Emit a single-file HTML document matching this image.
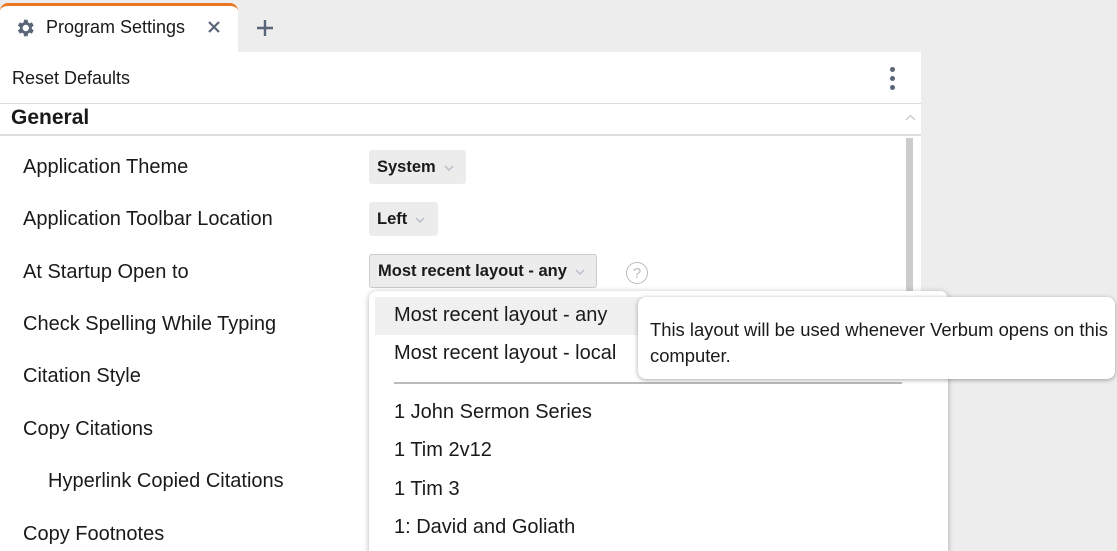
<!DOCTYPE html>
<html style="height:551px;overflow:hidden"><head><style>
body{margin:0;width:1117px;height:551px;background:#ededed;font-family:"Liberation Sans",sans-serif;position:relative;overflow:hidden;color:#1a1a1a}
.abs{position:absolute}
.tab{left:0;top:3px;width:238px;height:50px;background:#fff;border-top:3px solid #e87722;border-radius:8px 8px 0 0;box-sizing:border-box}
.panel{left:0;top:52px;width:921px;height:499px;background:#fff}
.lbl{font-size:20px;left:23px}
.sel{background:#ececec;border-radius:3px;font-size:16.5px;font-weight:bold;height:34px;line-height:34px;padding:0 8px;box-sizing:border-box;white-space:nowrap}
.chev{display:inline-block;width:10px;height:6px;margin-left:8px;vertical-align:middle}
.pop{left:369px;top:291px;width:579px;height:270px;background:#fff;border-radius:8px;box-shadow:0 1px 6px rgba(0,0,0,.3);overflow:hidden}
.it{font-size:20px;left:25px}
.tip{left:638px;top:297px;width:477px;height:82px;background:#fff;border-radius:8px;box-shadow:0 1px 5px rgba(0,0,0,.35);font-size:18.4px;line-height:26px;padding:20px 0 0 12px;box-sizing:border-box;white-space:nowrap}
</style></head><body>
<div class="abs tab"></div>
<svg class="abs" style="left:14px;top:17px" width="22" height="22" viewBox="0 0 24 24"><path fill="#5a6577" d="M19.4 13a7.5 7.5 0 000-2l2.1-1.6-2-3.5-2.5 1a7.3 7.3 0 00-1.700-1L14.9 3h-4l-.4 2.9a7.3 7.3 0 00-1.7 1l-2.5-1-2 3.5L6.4 11a7.5 7.5 0 000 2l-2.1 1.6 2 3.5 2.5-1a7.3 7.3 0 001.7 1l.4 2.9h4l.4-2.9a7.3 7.3 0 001.7-1l2.5 1 2-3.5zM12.9 15.5a3.5 3.5 0 110-7 3.5 3.5 0 010 7z"/></svg>
<div class="abs" style="left:46px;top:17px;font-size:18px">Program Settings</div>
<svg class="abs" style="left:207px;top:20px" width="14" height="14" viewBox="0 0 14 14"><path d="M2 2L12 12M12 2L2 12" stroke="#5a6577" stroke-width="2.2"/></svg>
<svg class="abs" style="left:256px;top:19px" width="18" height="18" viewBox="0 0 18 18"><path d="M9 1V17M1 9H17" stroke="#5a6577" stroke-width="2.4"/></svg>
<div class="abs panel"></div>
<div class="abs" style="left:12px;top:68px;font-size:18px">Reset Defaults</div>
<div class="abs" style="left:890px;top:67px;width:6px"><div style="width:5px;height:5px;border-radius:50%;background:#5a6577;margin-bottom:4px"></div><div style="width:5px;height:5px;border-radius:50%;background:#5a6577;margin-bottom:4px"></div><div style="width:5px;height:5px;border-radius:50%;background:#5a6577"></div></div>
<div class="abs" style="left:0;top:103px;width:921px;height:1px;background:#ddd"></div>
<div class="abs" style="left:11px;top:106px;font-size:21px;font-weight:bold">General</div>
<svg class="abs" style="left:905px;top:114px" width="11" height="7" viewBox="0 0 11 7"><path d="M1 6L5.5 1.5L10 6" fill="none" stroke="#ccc" stroke-width="1.4"/></svg>
<div class="abs" style="left:0;top:134px;width:921px;height:2px;background:#ddd"></div>
<div class="abs" style="left:906px;top:138px;width:7px;height:160px;background:#ccc"></div>
<div class="abs lbl" style="top:156px">Application Theme</div>
<div class="abs lbl" style="top:208px">Application Toolbar Location</div>
<div class="abs lbl" style="top:261px">At Startup Open to</div>
<div class="abs lbl" style="top:313px">Check Spelling While Typing</div>
<div class="abs lbl" style="top:365px">Citation Style</div>
<div class="abs lbl" style="top:418px">Copy Citations</div>
<div class="abs lbl" style="top:470px;left:48px">Hyperlink Copied Citations</div>
<div class="abs lbl" style="top:523px">Copy Footnotes</div>
<div class="abs sel" style="left:369px;top:150px;width:97px">System<svg class="chev" viewBox="0 0 10 6"><path d="M1 1L5 5L9 1" fill="none" stroke="#b8c0cc" stroke-width="1.5"/></svg></div>
<div class="abs sel" style="left:369px;top:202px;width:69px">Left<svg class="chev" viewBox="0 0 10 6"><path d="M1 1L5 5L9 1" fill="none" stroke="#b8c0cc" stroke-width="1.5"/></svg></div>
<div class="abs sel" style="left:369px;top:254px;width:228px;border:1px solid #ccc;line-height:32px">Most recent layout - any<svg class="chev" viewBox="0 0 10 6"><path d="M1 1L5 5L9 1" fill="none" stroke="#b8c0cc" stroke-width="1.5"/></svg></div>
<div class="abs" style="left:626px;top:262px;width:22px;height:22px;border:1px solid #bbb;border-radius:50%;box-sizing:border-box;color:#bbb;font-size:15px;text-align:center;line-height:21px">?</div>
<div class="abs pop">
<div class="abs" style="left:6px;top:6px;width:545px;height:38px;background:#f0f0f0"></div>
<svg class="abs" style="left:564px;top:9px" width="11" height="7" viewBox="0 0 11 7"><path d="M1 6L5.5 1.5L10 6" fill="none" stroke="#ccc" stroke-width="1.4"/></svg>
<div class="abs it" style="top:13px">Most recent layout - any</div>
<div class="abs it" style="top:51px">Most recent layout - local</div>
<div class="abs" style="left:25px;top:91px;width:508px;height:2px;background:#bbb"></div>
<div class="abs it" style="top:110px">1 John Sermon Series</div>
<div class="abs it" style="top:148px">1 Tim 2v12</div>
<div class="abs it" style="top:187px">1 Tim 3</div>
<div class="abs it" style="top:225px">1: David and Goliath</div>
</div>
<div class="abs tip">This layout will be used whenever Verbum opens on this<br>computer.</div>
</body></html>
